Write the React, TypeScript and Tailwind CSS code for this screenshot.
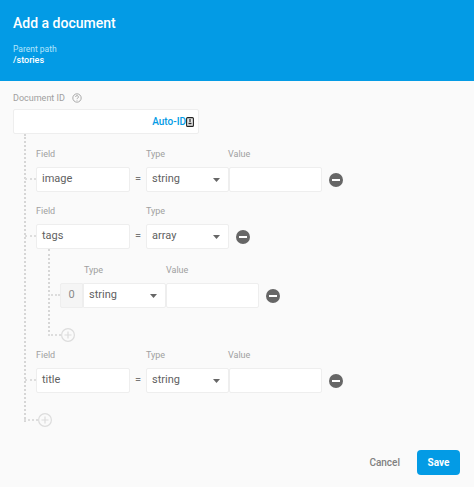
import React from "react";

function Minus() {
  return (
    <svg width="14" height="14" viewBox="0 0 14 14" className="shrink-0">
      <circle cx="7" cy="7" r="7" fill="#666666" />
      <rect x="3" y="6" width="8" height="2" fill="#ffffff" />
    </svg>
  );
}

function Plus() {
  return (
    <svg width="14" height="14" viewBox="0 0 14 14" className="shrink-0">
      <circle cx="7" cy="7" r="6.4" fill="none" stroke="#dcdcdc" strokeWidth="1.2" />
      <path d="M7 3.5v7M3.5 7h7" stroke="#dcdcdc" strokeWidth="1.2" />
    </svg>
  );
}

function Caret() {
  return (
    <svg width="7" height="4" viewBox="0 0 7 4" className="shrink-0">
      <path d="M0 0h7L3.5 4z" fill="#666666" />
    </svg>
  );
}

function TypeSelect({ value, flat }: { value: string; flat?: boolean }) {
  return (
    <div
      className={`w-[83px] h-[25px] shrink-0 bg-white flex items-center justify-between pl-[5px] pr-[8px] text-[11px] text-[#5f5f5f] border border-[#eeeeee] ${flat ? "rounded-r-[2px]" : "rounded-[2px]"}`}
    >
      <span>{value}</span>
      <Caret />
    </div>
  );
}

function ValueBox() {
  return <div className="w-[93px] h-[25px] shrink-0 bg-white border border-[#eeeeee] rounded-[2px]" />;
}

function Row({ name, type, value }: { name: string; type: string; value: boolean }) {
  return (
    <div className="relative">
      <div className="absolute left-[-11px] top-[30px] w-[11px] border-t-2 border-dotted border-[#dddddd]" />
      <div className="flex text-[9px] text-[#a0a0a0] h-[19px] items-start leading-[11px] pt-[1px]">
        <span className="w-[110px]">Field</span>
        <span className="w-[82px]">Type</span>
        {value && <span>Value</span>}
      </div>
      <div className="flex items-center">
        <div className="w-[94px] h-[25px] shrink-0 bg-white border border-[#eeeeee] rounded-[2px] flex items-center pl-[5px] text-[11px] text-[#5f5f5f]">
          {name}
        </div>
        <span className="w-[16px] shrink-0 text-center text-[11px] text-[#777777]">=</span>
        <TypeSelect value={type} />
        {value && <ValueBox />}
        <div className="ml-[7px]">
          <Minus />
        </div>
      </div>
    </div>
  );
}

export default function App() {
  return (
    <div className="w-[474px] h-[489px] bg-white font-['Roboto',sans-serif] overflow-hidden">
      <div className="h-[487px] bg-[#fafafa] flex flex-col">
        <header className="h-[81px] shrink-0 bg-[#039be5] pl-[13px] pt-[14px] text-white">
          <h1 className="text-[14px] font-medium leading-[19px]">Add a document</h1>
          <p className="mt-[11px] text-[8.5px] leading-[11px] text-[#b3e5fc]">Parent path</p>
          <p className="text-[9px] leading-[11px] font-medium">/stories</p>
        </header>

        <div className="pl-[13px] pt-[11px] h-[28px] flex items-start gap-[7px] text-[9px] leading-[12px] text-[#a0a0a0]">
          <span>Document ID</span>
          <svg width="10" height="10" viewBox="0 0 11 11" className="mt-[1px]">
            <circle cx="5.5" cy="5.5" r="4.6" fill="none" stroke="#8c8c8c" strokeWidth="0.8" />
            <path d="M4 4.4a1.5 1.5 0 1 1 2.3 1.2c-.5.3-.8.6-.8 1.1" fill="none" stroke="#8c8c8c" strokeWidth="0.8" />
            <circle cx="5.5" cy="8" r=".5" fill="#8c8c8c" />
          </svg>
        </div>

        <div className="ml-[13px] w-[186px] h-[25px] shrink-0 bg-white border border-[#eeeeee] rounded-[2px] flex items-center justify-end pr-[4px]">
          <span className="text-[10px] font-medium text-[#039be5]">Auto-ID</span>
          <svg width="8" height="10" viewBox="0 0 8 10" className="shrink-0">
            <rect x=".6" y=".6" width="6.8" height="8.8" rx="1" fill="#e8e8e8" stroke="#222222" strokeWidth="1.1" />
            <path d="M4 2v3" stroke="#222222" strokeWidth="1.2" />
            <path d="M2.5 6.5h3" stroke="#222222" strokeWidth="1.4" />
          </svg>
        </div>

        <div className="relative ml-[24px] pl-[12px] pt-[14px]">
          <div className="absolute left-0 top-0 h-[288px] border-l-2 border-dotted border-[#d6d6d6]" />
          <Row name="image" type="string" value />
          <div className="mt-[13px]">
            <Row name="tags" type="array" value={false} />
          </div>

          <div className="relative ml-[12px] pl-[12px] pt-[15px]">
            <div className="absolute left-0 top-0 h-[87px] border-l-2 border-dotted border-[#d6d6d6]" />
            <div className="absolute left-0 top-[45px] w-[12px] border-t-2 border-dotted border-[#dddddd]" />
            <div className="absolute left-0 top-[85px] w-[13px] border-t-2 border-dotted border-[#dddddd]" />
            <div className="flex text-[9px] text-[#a0a0a0] h-[19px] items-start leading-[11px] pt-[1px]">
              <span className="ml-[24px] w-[82px]">Type</span>
              <span>Value</span>
            </div>
            <div className="flex items-center">
              <div className="w-[23px] h-[25px] shrink-0 bg-[#f5f5f5] border border-[#eeeeee] rounded-l-[2px] flex items-center justify-center text-[11px] text-[#8a8a8a]">
                0
              </div>
              <TypeSelect value="string" flat />
              <ValueBox />
              <div className="ml-[7px]">
                <Minus />
              </div>
            </div>
            <div className="ml-[1px] mt-[20px] w-[14px]">
              <Plus />
            </div>
          </div>

          <div className="mt-[7px]">
            <Row name="title" type="string" value />
          </div>

          <div className="relative ml-[2px] mt-[20px] w-[14px]">
            <div className="absolute left-[-14px] top-[6px] w-[14px] border-t-2 border-dotted border-[#dddddd]" />
            <Plus />
          </div>
        </div>

        <div className="flex items-center justify-end pr-[14px] mt-[23px]">
          <span className="text-[10px] font-medium text-[#808080] mr-[17px]">Cancel</span>
          <button className="w-[43px] h-[25px] rounded-[4px] bg-[#039be5] text-white text-[10px] font-bold">
            Save
          </button>
        </div>
      </div>
    </div>
  );
}
